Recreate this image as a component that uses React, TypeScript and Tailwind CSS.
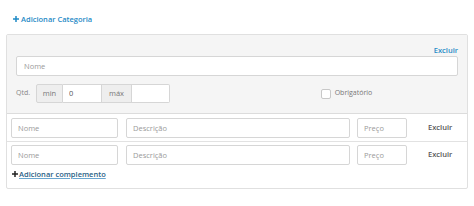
import React from 'react'

const inputCls =
  'block h-[20px] rounded-[2px] border border-[#d6d6d6] bg-white px-[6px] text-[7.5px] text-[#555] placeholder:text-[#9a9a9a] outline-none'

function PlusIcon({ className }: { className?: string }) {
  return (
    <svg viewBox="0 0 8 8" className={className} fill="currentColor">
      <path d="M3 0h2v3h3v2H5v3H3V5H0V3h3z" />
    </svg>
  )
}

function ItemRow({ last }: { last?: boolean }) {
  return (
    <div className={`flex items-center pl-[4px] ${last ? 'pt-[3px] pb-[4px]' : 'pt-[4px] pb-[3px] border-b border-[#e2e2e2]'}`}>
      <input className={`${inputCls} w-[107px] shrink-0`} placeholder="Nome" />
      <input className={`${inputCls} w-[224px] ml-[8px] shrink-0`} placeholder="Descrição" />
      <input className={`${inputCls} w-[50px] ml-[7px] shrink-0`} placeholder="Preço" />
      <button className="ml-[21px] text-[7.5px] font-semibold text-[#555]">Excluir</button>
    </div>
  )
}

export default function App() {
  return (
    <div className="w-[474px] h-[206px] bg-white font-['Open_Sans',sans-serif]">
      <div className="h-[34px] pl-[13px] pt-[14px]">
        <a href="#" className="flex items-center gap-[2px] text-[7.5px] font-semibold leading-[10px] text-[#1f8ac6]">
          <PlusIcon className="w-[6px] h-[6px]" />
          Adicionar Categoria
        </a>
      </div>

      <div className="ml-[6px] w-[462px] h-[155px] rounded-[2px] border border-[#e0e0e0] bg-white overflow-hidden">
        <div className="bg-[#f5f5f5] px-[9px] pt-[9px] pb-[10px] border-b border-[#dcdcdc]">
          <div className="flex h-[12px] justify-end">
            <a href="#" className="text-[7.5px] font-semibold leading-[12px] text-[#1f8ac6]">Excluir</a>
          </div>
          <input className={`${inputCls} w-full h-[19px] px-[7px]`} placeholder="Nome" />
          <div className="mt-[8px] grid h-[19px] grid-cols-3 items-center">
            <div className="flex items-center">
              <span className="w-[20px] shrink-0 text-[7px] text-[#888]">Qtd.</span>
              <div className="flex h-[19px] shrink-0 items-stretch">
                <span className="flex w-[27px] shrink-0 items-center justify-center rounded-l-[2px] border border-[#d6d6d6] bg-[#eeeeee] text-[7.5px] text-[#777]">
                  min
                </span>
                <input className="block w-[38px] shrink-0 border-y border-[#d6d6d6] bg-white px-[6px] text-[7.5px] text-[#555] outline-none" defaultValue="0" />
                <span className="flex w-[31px] shrink-0 items-center justify-center border border-[#d6d6d6] bg-[#eeeeee] text-[7.5px] text-[#777]">
                  máx
                </span>
                <input className="block w-[38px] shrink-0 rounded-r-[2px] border-y border-r border-[#d6d6d6] bg-white px-[6px] text-[7.5px] outline-none" />
              </div>
            </div>
            <div />
            <label className="flex items-center gap-[4px] pl-[10px]">
              <span className="h-[10px] w-[10px] rounded-[2px] border border-[#c8c8c8] bg-white" />
              <span className="text-[7px] text-[#777]">Obrigatório</span>
            </label>
          </div>
        </div>

        <ItemRow />
        <ItemRow last />

        <div className="pl-[5px]">
          <a href="#" className="flex items-center gap-[1px] text-[7.5px] font-semibold leading-[10px] text-[#2b5f86]">
            <PlusIcon className="w-[6px] h-[6px] text-[#222]" />
            <span className="underline decoration-[#6aa6cf]">Adicionar complemento</span>
          </a>
        </div>
      </div>
    </div>
  )
}
